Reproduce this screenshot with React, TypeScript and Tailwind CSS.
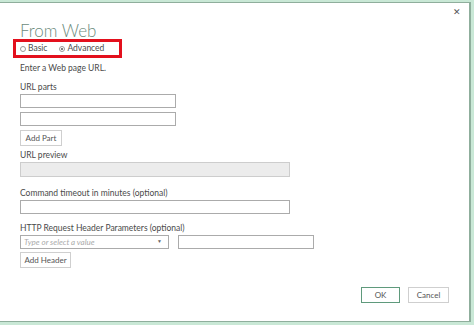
import React from 'react';

const font = { fontFamily: 'Lato, "Open Sans", sans-serif' };

const Field: React.FC<{ w: string }> = ({ w }) => (
  <div className={`${w} h-[14px] border border-[#ababab] bg-white`} />
);

const Btn: React.FC<{ label: string; w: string; primary?: boolean }> = ({ label, w, primary }) => (
  <button
    className={`${w} h-[16px] border ${
      primary ? 'border-[#5f9a7c]' : 'border-[#cfcfcf]'
    } bg-white text-[8px] text-[#555] leading-none flex items-center justify-center`}
  >
    {label}
  </button>
);

export default function App() {
  return (
    <div className="w-[474px] h-[325px] bg-[#c9e8d6] overflow-hidden" style={font}>
      <div className="mt-[2px] w-[471px] h-[320px] bg-white border-t border-r-[2px] border-b border-[#8fae9c] relative flex flex-col pl-[20px] text-[#4a4a4a]">
        <div className="absolute right-[8px] top-[4px] text-[9px] text-[#555] leading-none">✕</div>

        <div className="mt-[19px] text-[17px] leading-none text-[#6c8b7c] font-light">From Web</div>

        <div className="-ml-[7px] mt-0 w-[109px] h-[19px] border-[3px] border-[#e3101d] flex items-center gap-[2px] pl-[4px] text-[8.5px]">
          <span className="w-[6px] h-[6px] rounded-full border border-[#999] bg-white" />
          <span className="mr-[10px]">Basic</span>
          <span className="w-[6px] h-[6px] rounded-full border border-[#999] bg-white flex items-center justify-center">
            <span className="w-[2px] h-[2px] rounded-full bg-[#555]" />
          </span>
          <span>Advanced</span>
        </div>

        <div className="mt-[4px] text-[8.5px] leading-[12px]">Enter a Web page URL.</div>

        <div className="mt-[7px] text-[8.5px] leading-[12px]">URL parts</div>
        <div className="mt-[1px]"><Field w="w-[156px]" /></div>
        <div className="mt-[4px]"><Field w="w-[156px]" /></div>
        <div className="mt-[4px]"><Btn label="Add Part" w="w-[42px]" /></div>

        <div className="mt-[3px] text-[8.5px] leading-[12px]">URL preview</div>
        <div className="mt-[1px] w-[270px] h-[15px] border border-[#cdcdcd] bg-[#ececec]" />

        <div className="mt-[10px] text-[8.5px] leading-[12px]">Command timeout in minutes (optional)</div>
        <div className="mt-[1px]"><Field w="w-[270px]" /></div>

        <div className="mt-[8px] text-[8.5px] leading-[12px]">HTTP Request Header Parameters (optional)</div>
        <div className="mt-[1px] flex gap-[9px]">
          <div className="w-[149px] h-[14px] border border-[#ababab] bg-white flex items-center justify-between px-[3px]">
            <span className="text-[8px] italic text-[#aaa] leading-none">Type or select a value</span>
            <span className="text-[5px] text-[#666] mr-[3px]">▼</span>
          </div>
          <Field w="w-[136px]" />
        </div>
        <div className="mt-[3px]"><Btn label="Add Header" w="w-[51px]" /></div>

        <div className="absolute right-[20px] bottom-[18px] flex gap-[8px]">
          <Btn label="OK" w="w-[39px]" primary />
          <Btn label="Cancel" w="w-[41px]" />
        </div>
      </div>
    </div>
  );
}
